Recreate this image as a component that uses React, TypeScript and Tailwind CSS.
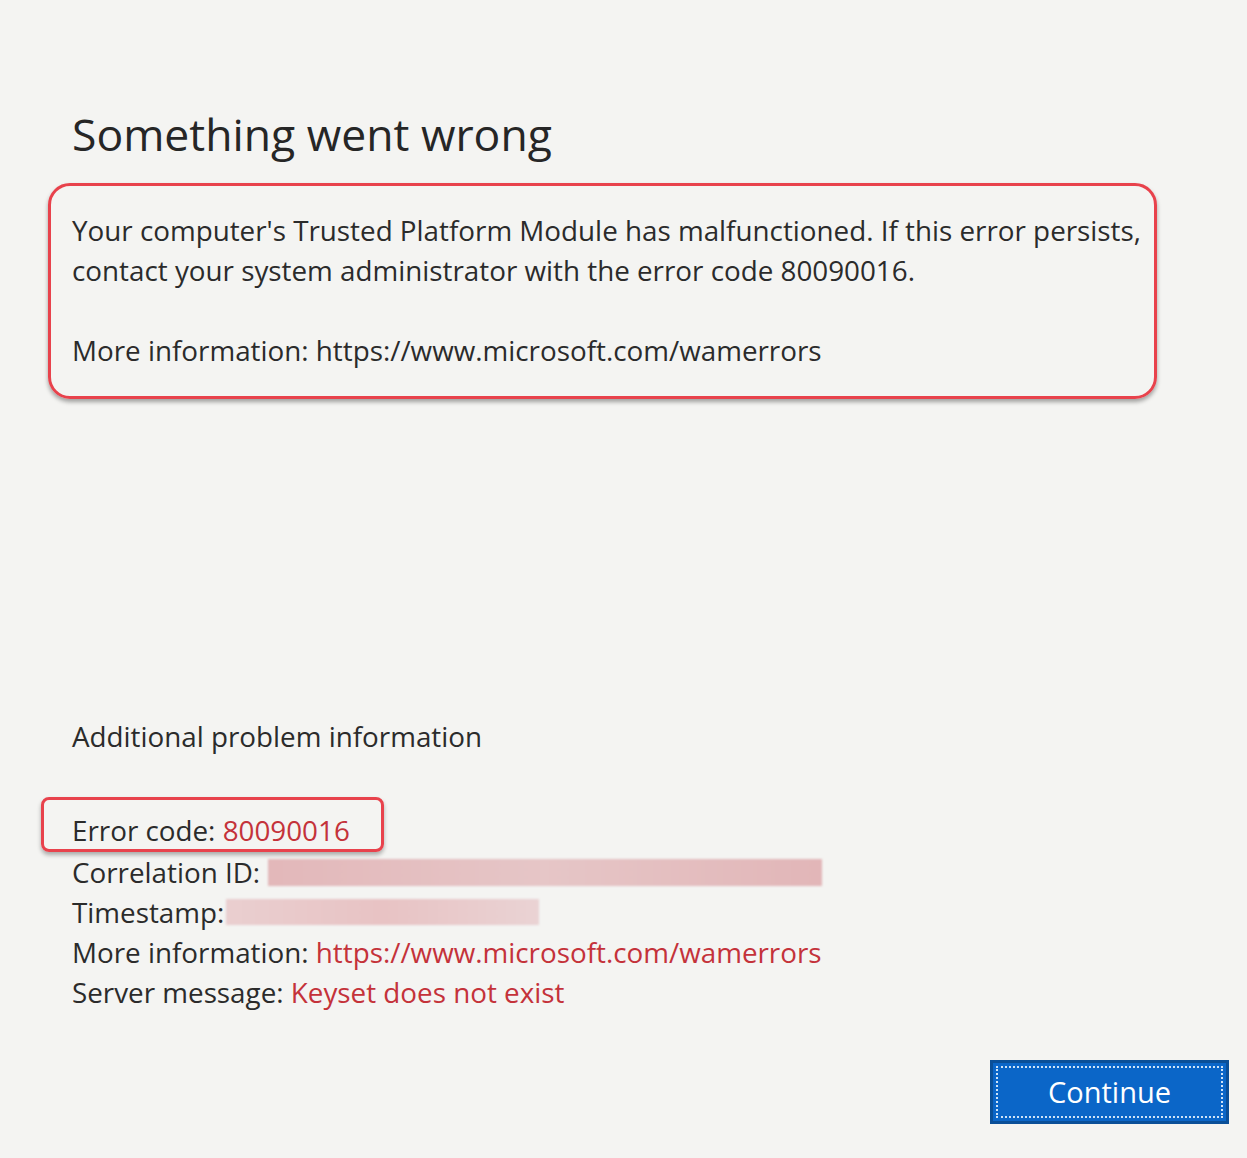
export default function App() {
  const font = { fontFamily: '"Open Sans", "Noto Sans", sans-serif' }
  return (
    <div className="w-[1247px] h-[1158px] bg-[#f4f4f2] text-[#2b2b2b] overflow-hidden relative" style={font}>
      <div className="pl-[72px] pt-[104px]">
        <h1 className="text-[44.5px] leading-[60px] text-[#262626] font-normal">Something went wrong</h1>
      </div>
      <div className="ml-[48px] mt-[19px] w-[1109px] h-[216px] rounded-[22px] border-[3px] border-[#e8424c] shadow-[0_3px_4px_rgba(0,0,0,0.35)] pl-[21px] pt-[24px] text-[27.8px] leading-[40px]">
        <p>Your computer's Trusted Platform Module has malfunctioned. If this error persists,</p>
        <p>contact your system administrator with the error code 80090016.</p>
        <p className="mt-[40px]">More information: https://www.microsoft.com/wamerrors</p>
      </div>
      <div className="pl-[72px] mt-[317px] text-[27.8px] leading-[40px]">
        <p>Additional problem information</p>
      </div>
      <div className="mt-[41px] text-[27.8px] leading-[40px]">
        <div className="ml-[41px] w-[343px] h-[55px] rounded-[8px] border-[3px] border-[#e8424c] shadow-[0_3px_4px_rgba(0,0,0,0.3)] pl-[28px] pt-[10px]">
          <p className="leading-[40px]">
            Error code: <span className="text-[#c4323a]">80090016</span>
          </p>
        </div>
        <div className="pl-[72px]">
          <p className="flex items-center">
            Correlation ID:
            <span className="ml-[8px] inline-block w-[554px] h-[27px] bg-gradient-to-r from-[#e3b8ba] via-[#e6c6c7] to-[#e2b6b8] blur-[1px]" />
          </p>
          <p className="flex items-center">
            Timestamp:
            <span className="ml-[2px] inline-block w-[313px] h-[26px] bg-gradient-to-r from-[#eacfd0] via-[#e8c3c4] to-[#ead3d4] blur-[1px]" />
          </p>
          <p>
            More information: <span className="text-[#c4323a]">https://www.microsoft.com/wamerrors</span>
          </p>
          <p>
            Server message: <span className="text-[#c4323a]">Keyset does not exist</span>
          </p>
        </div>
      </div>
      <div className="absolute left-[990px] top-[1060px] w-[239px] h-[64px] bg-[#0b66c8] border-[3px] border-[#0a4f98] p-[3px]">
        <div className="w-full h-full border-[2px] border-dotted border-[#cfe3f7] flex items-center justify-center text-white text-[29px]">
          Continue
        </div>
      </div>
    </div>
  )
}
